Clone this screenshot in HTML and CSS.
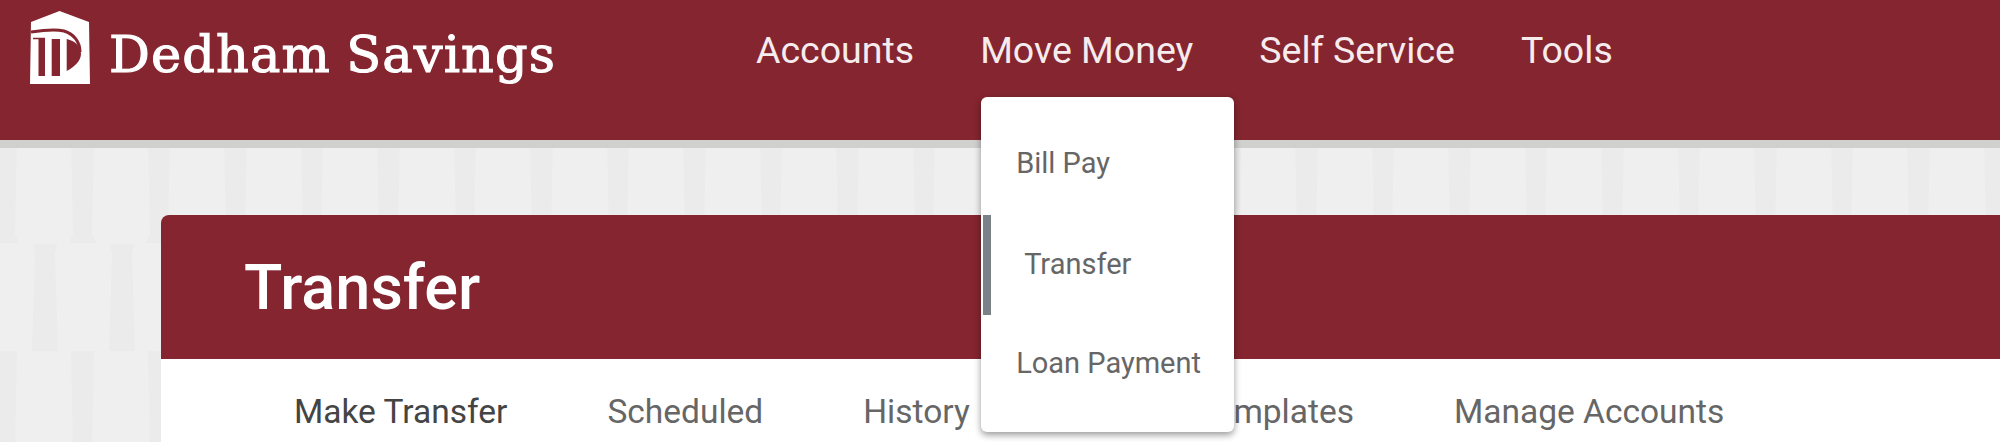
FILE: index.html
```html
<!DOCTYPE html>
<html lang="en">
<head>
  <meta charset="UTF-8">
  <title>Transfer - Dedham Savings</title>
  <link rel="stylesheet" href="styles.css">
</head>
<body>

<header class="topbar">
  <a class="brand" href="#">
    <svg class="brand-icon" viewBox="0 0 61 74" aria-hidden="true">
      <path fill="#fff" d="M29.5 0 L59 11 L60 73 L0 73 L1 11 Z"/>
      <path fill="none" stroke="#84252f" stroke-width="3" d="M1 21 C14 19 26 18 34 20 C44 23 50 31 50 41"/>
      <path fill="none" stroke="#84252f" stroke-width="1.5" d="M3 27.5 H15"/>
      <path fill="#84252f" d="M8.5 28 H15 V65 H8.5 Z M21.7 28 H30 V65 H21.7 Z M36.7 28 C46 30 51 36 51 43 C51 50 44 56 36.7 60 Z"/>
    </svg>
    <span class="brand-name">Dedham Savings</span>
  </a>
  <nav class="main-nav">
    <a href="#">Accounts</a>
    <div class="nav-item">
      <a href="#">Move Money</a>
      <ul class="dropdown">
        <li><a href="#">Bill Pay</a></li>
        <li class="active"><a href="#">Transfer</a></li>
        <li><a href="#">Loan Payment</a></li>
      </ul>
    </div>
    <a href="#">Self Service</a>
    <a href="#">Tools</a>
  </nav>
</header>

<main class="content">
  <section class="card">
    <h1 class="card-title">Transfer</h1>
    <div class="tabs">
      <a class="current" href="#">Make Transfer</a>
      <a href="#">Scheduled</a>
      <a href="#">History</a>
      <a class="templates" href="#">Transfer Templates</a>
      <a href="#">Manage Accounts</a>
    </div>
  </section>
</main>

</body>
</html>
```

FILE: styles.css
```css
html, body {
  height: 442px;
  overflow: hidden;
}
body {
  margin: 0;
  font-family: Roboto, Arial, sans-serif;
  background-color: #efefef;
  background-image: url("data:image/svg+xml,%3Csvg xmlns='http://www.w3.org/2000/svg' width='153' height='215'%3E%3Cg fill='%23ebebeb'%3E%3Cpath d='M-6 0H17L15 98L19 107H-8L-4 98Z'/%3E%3Cpath d='M71 0H94L92 98L96 107H69L73 98Z'/%3E%3Cpath d='M148 0H171L169 98L173 107H146L150 98Z'/%3E%3Cpath d='M33 108H57L55 118L58 215H32L35 118Z'/%3E%3Cpath d='M110 108H134L132 118L135 215H109L112 118Z'/%3E%3C/g%3E%3C/svg%3E");
  background-position: 0 136px;
}
a {
  color: inherit;
  text-decoration: none;
}

.topbar {
  display: flex;
  height: 140px;
  background-color: #84252f;
  border-bottom: 8px solid #d0d0ce;
  color: #fff;
}
.brand {
  display: flex;
  align-items: flex-start;
  width: 756px;
  padding-left: 30px;
  box-sizing: border-box;
}
.brand-icon {
  width: 61px;
  height: 74px;
  margin-top: 11px;
  flex: none;
}
.brand-name {
  margin: 23px 0 0 18px;
  font-family: "DejaVu Serif", serif;
  font-size: 51px;
  line-height: 64px;
  letter-spacing: 1.1px;
  word-spacing: -2px;
  -webkit-text-stroke: 1.1px #fff;
  white-space: nowrap;
}

.main-nav {
  display: flex;
  gap: 66px;
  font-size: 37.5px;
  line-height: 100px;
  color: #f6ecee;
}
.nav-item {
  position: relative;
}
.dropdown {
  position: absolute;
  top: 97px;
  left: 1px;
  width: 253px;
  height: 335px;
  margin: 0;
  padding: 16px 0 0;
  box-sizing: border-box;
  list-style: none;
  background-color: #fff;
  border-radius: 6px;
  box-shadow: 0 3px 7px rgba(0,0,0,0.4);
  font-size: 29px;
  line-height: 100px;
  color: #666;
}
.dropdown li {
  height: 100px;
  padding-left: 35px;
}
.dropdown .active {
  margin: 2px 0 -2px 2px;
  padding-left: 33px;
  border-left: 8px solid #7a8288;
  line-height: 98px;
}

.content {
  padding: 67px 0 0 161px;
}
.card {
  width: 1900px;
  background-color: #fff;
  border-radius: 8px 0 0 0;
}
.card-title {
  height: 144px;
  margin: 0;
  padding-left: 83px;
  background-color: #84252f;
  border-radius: 8px 0 0 0;
  color: #fff;
  font-size: 63px;
  font-weight: 500;
  line-height: 146px;
}
.tabs {
  display: flex;
  gap: 100px;
  padding-left: 133px;
  font-size: 33.5px;
  line-height: 106px;
  color: #666;
}
.tabs .current {
  color: #444;
}
.tabs .templates {
  margin-left: -4px;
}
```
